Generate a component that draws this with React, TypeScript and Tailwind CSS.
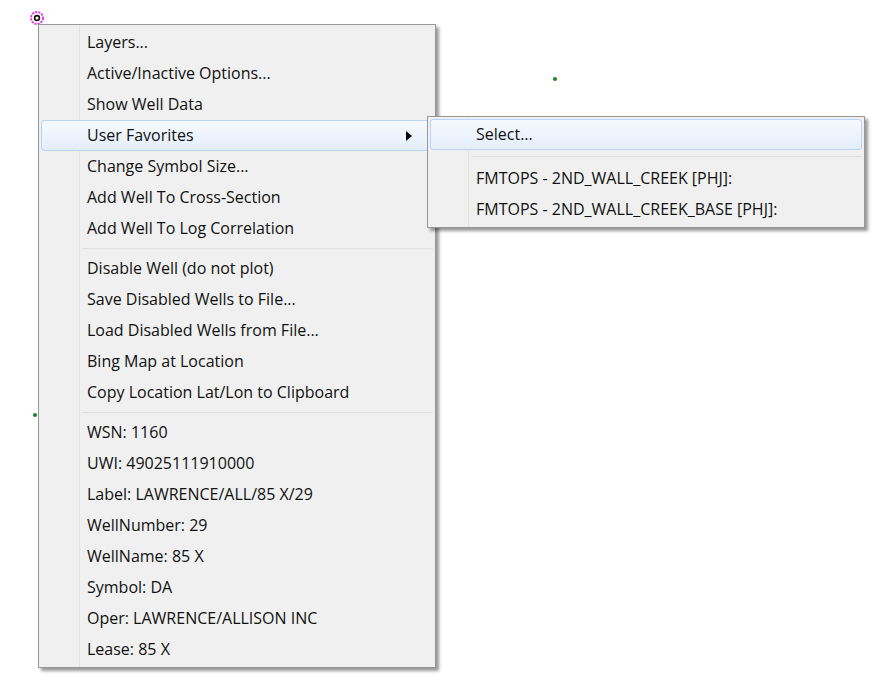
import React from "react";

type Entry = { label: string; sub?: boolean; hot?: boolean } | "sep";

const mainItems: Entry[] = [
  { label: "Layers..." },
  { label: "Active/Inactive Options..." },
  { label: "Show Well Data" },
  { label: "User Favorites", sub: true, hot: true },
  { label: "Change Symbol Size..." },
  { label: "Add Well To Cross-Section" },
  { label: "Add Well To Log Correlation" },
  "sep",
  { label: "Disable Well (do not plot)" },
  { label: "Save Disabled Wells to File..." },
  { label: "Load Disabled Wells from File..." },
  { label: "Bing Map at Location" },
  { label: "Copy Location Lat/Lon to Clipboard" },
  "sep",
  { label: "WSN: 1160" },
  { label: "UWI: 49025111910000" },
  { label: "Label: LAWRENCE/ALL/85 X/29" },
  { label: "WellNumber: 29" },
  { label: "WellName: 85 X" },
  { label: "Symbol: DA" },
  { label: "Oper: LAWRENCE/ALLISON INC" },
  { label: "Lease: 85 X" },
];

const subItems: Entry[] = [
  { label: "Select...", hot: true },
  "sep",
  { label: "FMTOPS - 2ND_WALL_CREEK [PHJ]:" },
  { label: "FMTOPS - 2ND_WALL_CREEK_BASE [PHJ]:" },
];

function MenuRows({ items, sepClass }: { items: Entry[]; sepClass: string }) {
  return (
    <>
      {items.map((it, i) =>
        it === "sep" ? (
          <div key={i} className={`flex items-center pl-[41px] ${sepClass}`}>
            <div className="h-[2px] flex-1 border-t border-[#e0e0e0] border-b-white" />
          </div>
        ) : (
          <div
            key={i}
            className={`relative flex h-[31px] items-center rounded-[3px] border pb-[2px] pl-[45px] pr-4 ${
              it.hot
                ? "border-[#b9d4f4] bg-gradient-to-b from-[#f6f9fe] to-[#e4eefb]"
                : "border-transparent"
            }`}
          >
            <span className="flex-1 whitespace-nowrap">{it.label}</span>
            {it.sub && (
              <svg width="6" height="10" viewBox="0 0 6 10" className="mr-[4px] mt-[2px]">
                <path d="M0 0 L6 5 L0 10 Z" fill="#000" />
              </svg>
            )}
          </div>
        )
      )}
    </>
  );
}

function Menu({
  className,
  items,
  sepClass,
}: {
  className: string;
  items: Entry[];
  sepClass: string;
}) {
  return (
    <div
      className={`absolute border border-[#979797] bg-[#f0f0f0] p-[2px] shadow-[3px_3px_3px_rgba(0,0,0,0.4)] ${className}`}
    >
      {/* icon gutter divider */}
      <div className="pointer-events-none absolute bottom-0 left-[40px] top-0 w-[2px] border-l border-[#e2e3e3] border-r-white" />
      <div className="relative flex flex-col">
        <MenuRows items={items} sepClass={sepClass} />
      </div>
    </div>
  );
}

export default function App() {
  return (
    <div
      className="relative h-[684px] w-[876px] overflow-hidden bg-white text-[16px] font-medium text-[#111]"
      style={{ fontFamily: '"Open Sans", "Noto Sans", sans-serif' }}
    >
      {/* well target marker */}
      <svg className="absolute left-[29px] top-[10px]" width="16" height="16" viewBox="0 0 16 16">
        <circle cx="8" cy="8" r="6" fill="none" stroke="#e43ce4" strokeWidth="2" strokeDasharray="2.2 1" />
        <circle cx="8" cy="8" r="2.4" fill="none" stroke="#111" strokeWidth="1.6" />
      </svg>
      <div className="absolute left-[553px] top-[77px] h-[4px] w-[4px] rounded-full bg-[#178a1f]" />
      <div className="absolute left-[33px] top-[413px] h-[4px] w-[4px] rounded-full bg-[#178a1f]" />

      <Menu className="left-[38px] top-[24px] w-[398px]" items={mainItems} sepClass="h-[9px]" />
      <Menu className="left-[427px] top-[116px] w-[438px]" items={subItems} sepClass="h-[13px]" />
    </div>
  );
}
